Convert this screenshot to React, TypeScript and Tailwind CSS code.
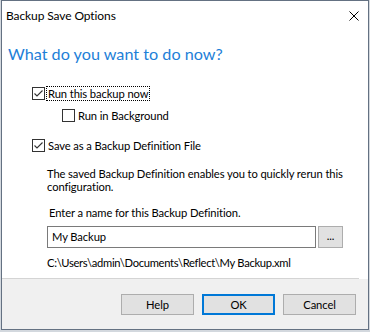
import React from "react";

const font = "font-['Lato','Noto_Sans',sans-serif]";

function CheckBox({ checked }: { checked: boolean }) {
  return (
    <span className="w-[13px] h-[13px] border border-[#333333] bg-white flex items-center justify-center shrink-0">
      {checked && (
        <svg width="11" height="11" viewBox="0 0 11 11">
          <polyline points="1.5,5.5 4,8 9.5,2.5" fill="none" stroke="#333333" strokeWidth="1.1" />
        </svg>
      )}
    </span>
  );
}

export default function App() {
  return (
    <div className={`w-[370px] h-[332px] bg-[#d3d8de] overflow-hidden text-[11.2px] tracking-[-0.1px] text-black ${font}`}>
      <div className="ml-px w-[368px] h-[330px] border border-[#647182] bg-white flex flex-col">
        {/* title bar */}
        <div className="h-[29px] flex items-center justify-between pl-[4px] pr-[9px] shrink-0">
          <span className="text-[12px] tracking-[-0.1px] leading-[16px]">Backup Save Options</span>
          <svg width="10" height="10" viewBox="0 0 10 10">
            <path d="M0.5 0.5 L9.5 9.5 M9.5 0.5 L0.5 9.5" stroke="#000" strokeWidth="1" />
          </svg>
        </div>

        {/* client */}
        <div className="h-[248px] shrink-0 flex flex-col">
          <div className="pt-[12px] pl-[6px] text-[16.2px] tracking-normal leading-[24px] text-[#1e7fd8]">
            What do you want to do now?
          </div>

          <div className="mt-[19px] h-[17px] pl-[30px] flex items-center">
            <CheckBox checked />
            <span className="ml-px border border-dotted border-black px-px leading-[13px]">Run this backup now</span>
          </div>
          <div className="mt-[5px] h-[17px] pl-[60px] flex items-center">
            <CheckBox checked={false} />
            <span className="ml-[3px] leading-[15px]">Run in Background</span>
          </div>
          <div className="mt-[13px] h-[17px] pl-[30px] flex items-center">
            <CheckBox checked />
            <span className="ml-[3px] leading-[15px]">Save as a Backup Definition File</span>
          </div>

          <div className="mt-[13px] pl-[45px] leading-[13px] whitespace-nowrap">
            The saved Backup Definition enables you to quickly rerun this
            <br />
            configuration.
          </div>
          <div className="mt-[12px] pl-[47px] leading-[15px]">Enter a name for this Backup Definition.</div>

          <div className="mt-[6px] pl-[45px] flex items-center gap-[2px]">
            <div className="w-[269px] h-[22px] border border-[#7a7a7a] bg-white flex items-center pl-[4px]">
              My Backup
            </div>
            <div className="w-[25px] h-[22px] border border-[#adadad] bg-[#e1e1e1] flex items-center justify-center leading-none pb-[2px]">
              ...
            </div>
          </div>

          <div className="mt-[7px] pl-[45px] leading-[15px] tracking-[-0.3px]">C:\Users\admin\Documents\Reflect\My Backup.xml</div>
        </div>

        {/* separator */}
        <div className="h-px w-[357px] bg-[#d4d4d4] shrink-0" />

        {/* footer */}
        <div className="flex-1 bg-[#f0f0f0] flex justify-end items-start pt-[15px] pr-[12px] gap-[8px]">
          <button className="w-[73px] h-[21px] border border-[#adadad] bg-[#e1e1e1] leading-none">Help</button>
          <button className="w-[73px] h-[21px] border-2 border-[#0078d7] bg-[#e1e1e1] leading-none">OK</button>
          <button className="w-[73px] h-[21px] border border-[#adadad] bg-[#e1e1e1] leading-none">Cancel</button>
        </div>
      </div>
    </div>
  );
}
